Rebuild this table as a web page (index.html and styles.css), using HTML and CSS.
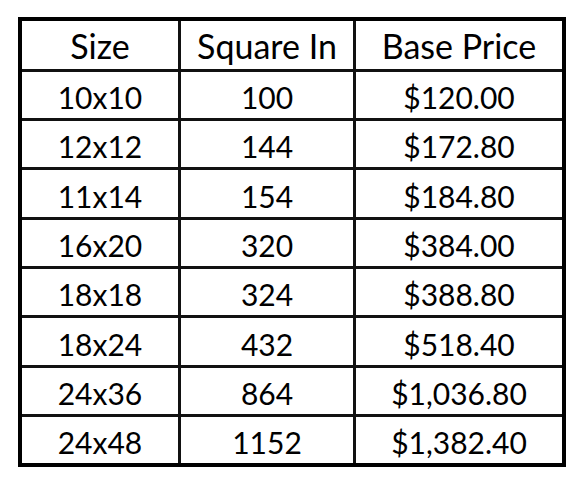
FILE: index.html
```html
<!DOCTYPE html>
<html>
<head>
<meta charset="utf-8">
<link rel="stylesheet" href="styles.css">
</head>
<body>
<table class="price-table">
  <colgroup>
    <col class="col-size">
    <col class="col-sq">
    <col class="col-price">
  </colgroup>
  <thead>
    <tr class="head-row"><th>Size</th><th>Square In</th><th>Base Price</th></tr>
  </thead>
  <tbody>
    <tr class="r46"><td>10x10</td><td>100</td><td>$120.00</td></tr>
    <tr class="r46"><td>12x12</td><td>144</td><td>$172.80</td></tr>
    <tr class="r47"><td>11x14</td><td>154</td><td>$184.80</td></tr>
    <tr class="r46"><td>16x20</td><td>320</td><td>$384.00</td></tr>
    <tr class="r46"><td>18x18</td><td>324</td><td>$388.80</td></tr>
    <tr class="r47"><td>18x24</td><td>432</td><td>$518.40</td></tr>
    <tr class="r46"><td>24x36</td><td>864</td><td>$1,036.80</td></tr>
    <tr class="r46 last"><td>24x48</td><td>1152</td><td>$1,382.40</td></tr>
  </tbody>
</table>
</body>
</html>
```
FILE: styles.css
```css
html, body {
  margin: 0;
  padding: 0;
  background: #ffffff;
}
body {
  padding: 17px 0 0 18px;
}
.price-table {
  border-collapse: separate;
  border-spacing: 0;
  border: 4px solid #000;
  font-family: Lato, "Liberation Sans", sans-serif;
  color: #000;
  table-layout: fixed;
  width: 548px;
}
.col-size { width: 159px; }
.col-sq { width: 175px; }
.col-price { width: 206px; }
.price-table th,
.price-table td {
  padding: 4px 0 0 0;
  text-align: center;
  vertical-align: middle;
  font-weight: normal;
  border-right: 3px solid #111;
  border-bottom: 3px solid #111;
  line-height: 30px;
}
.price-table th {
  font-size: 34px;
  padding-top: 2px;
}
.price-table td {
  font-size: 30px;
}
.price-table th:last-child,
.price-table td:last-child {
  border-right: none;
}
.price-table tr.last td {
  border-bottom: none;
}
.head-row th { height: 46px; }
.r46 td { height: 42px; }
.r47 td { height: 43px; }
```
